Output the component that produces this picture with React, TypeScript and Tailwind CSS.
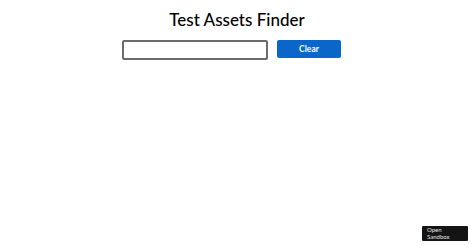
export default function App() {
  return (
    <div
      className="relative h-[248px] w-full bg-white"
      style={{ fontFamily: "Lato, 'Liberation Sans', sans-serif" }}
    >
      {/* Header */}
      <div className="flex flex-col items-center pt-[8px]">
        <h1 className="text-[17px] leading-[24px] font-medium text-black">
          Test Assets Finder
        </h1>

        {/* Search row */}
        <div className="mt-[8px] flex items-start gap-[9px] pr-[11px]">
          <input
            type="text"
            className="h-[20px] w-[146px] rounded-[2px] border-2 border-[#6b6b6b] bg-white outline-none"
          />
          <button className="h-[18px] w-[64px] rounded-[2px] bg-[#0a66c8] text-[8.5px] font-bold text-white">
            Clear
          </button>
        </div>
      </div>

      {/* Sandbox badge */}
      <div className="absolute right-[6px] bottom-[7px] h-[15px] w-[46px] rounded-[1px] bg-[#141414] px-[5px] pt-[1px] text-[6px] leading-[6.5px] text-[#e5e5e5]">
        Open
        <br />
        Sandbox
      </div>
    </div>
  );
}
